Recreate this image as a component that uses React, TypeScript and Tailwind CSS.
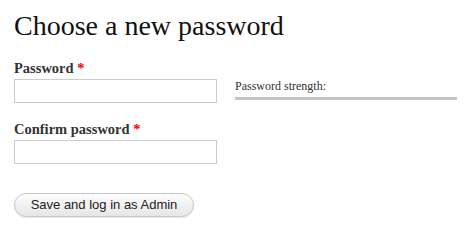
const serif = "font-['Liberation_Serif',Georgia,serif]";

function Label({ text }: { text: string }) {
  return (
    <label className={`${serif} block text-[14.5px] font-bold leading-[16px] text-[#333]`}>
      {text} <span className="text-[#e00]">*</span>
    </label>
  );
}

export default function App() {
  return (
    <div className="h-[228px] w-[474px] bg-white px-[14px] pt-[9px]">
      <h1 className={`${serif} text-[28px] leading-[34px] text-[#111]`}>
        Choose a new password
      </h1>
      <div className="mt-[17px] flex items-end">
        <div>
          <Label text="Password" />
          <input type="password" className="mt-[3px] block h-[24px] w-[203px] border border-[#ccc] bg-white outline-none" />
        </div>
        <div className="mb-[3px] ml-[18px] w-[222px]">
          <div className={`${serif} text-[12px] leading-[13px] text-[#333]`}>Password strength:</div>
          <div className="mt-[4px] h-[3px] w-full bg-[#c4c4c4]" />
        </div>
      </div>
      <div className="mt-[18px]">
        <Label text="Confirm password" />
        <input type="password" className="mt-[3px] block h-[24px] w-[203px] border border-[#ccc] bg-white outline-none" />
      </div>
      <button className="mt-[29px] flex h-[24px] w-[180px] items-center justify-center rounded-full border border-[#c8c8c8] bg-gradient-to-b from-[#fdfdfd] to-[#e6e6e6] font-['Liberation_Sans',Arial,sans-serif] text-[13px] text-[#222] shadow-[0_1px_1px_rgba(0,0,0,0.1)]">
        Save and log in as Admin
      </button>
    </div>
  );
}
